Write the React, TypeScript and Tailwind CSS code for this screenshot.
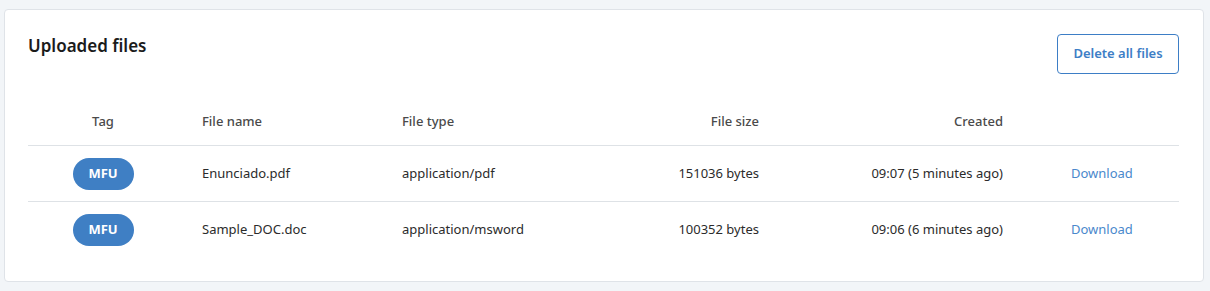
import React from 'react';

interface FileRow {
  tag: string;
  name: string;
  type: string;
  size: string;
  created: string;
}

const files: FileRow[] = [
  { tag: 'MFU', name: 'Enunciado.pdf', type: 'application/pdf', size: '151036 bytes', created: '09:07 (5 minutes ago)' },
  { tag: 'MFU', name: 'Sample_DOC.doc', type: 'application/msword', size: '100352 bytes', created: '09:06 (6 minutes ago)' },
];

const cols = 'grid grid-cols-[150px_200px_221px_184px_244px_1fr] items-center';

const App: React.FC = () => {
  return (
    <div className="min-h-[291px] bg-[#f2f5f8] pt-[9px] pl-[4px] font-['Noto_Sans','Open_Sans',sans-serif]">
      <div className="w-[1200px] rounded-[4px] border border-[#dfe3e8] bg-white pl-[23px] pr-[24px] pt-6 pb-[23px]">
        <div className="flex items-start justify-between">
          <h2 className="text-[17px] leading-[24px] font-semibold text-[#1b1b1b]">Uploaded files</h2>
          <button className="h-[40px] w-[122px] rounded-[4px] border border-[#3d7ec6] text-[13px] font-semibold text-[#3d7ec6]">
            Delete all files
          </button>
        </div>

        <div className="mt-[25px]">
          <div className={`${cols} h-[47px] border-b border-[#dee2e6] text-[13px] font-medium text-[#4a4a4a]`}>
            <div className="text-center">Tag</div>
            <div className="pl-6">File name</div>
            <div className="pl-6">File type</div>
            <div className="pr-6 text-right">File size</div>
            <div className="pr-6 text-right">Created</div>
            <div />
          </div>
          {files.map((f, i) => (
            <div
              key={f.name}
              className={`${cols} h-[56px] text-[13px] text-[#2b2b2b] ${i < files.length - 1 ? 'border-b border-[#dee2e6]' : ''}`}
            >
              <div className="flex justify-center">
                <span className="flex h-[32px] w-[61px] items-center justify-center rounded-full bg-[#3f7fc4] text-[13px] font-bold text-white">
                  {f.tag}
                </span>
              </div>
              <div className="pl-6">{f.name}</div>
              <div className="pl-6">{f.type}</div>
              <div className="pr-6 text-right">{f.size}</div>
              <div className="pr-6 text-right">{f.created}</div>
              <div className="pl-[44px]">
                <a href="#" className="text-[#4a88cc]">Download</a>
              </div>
            </div>
          ))}
        </div>
      </div>
    </div>
  );
};

export default App;
